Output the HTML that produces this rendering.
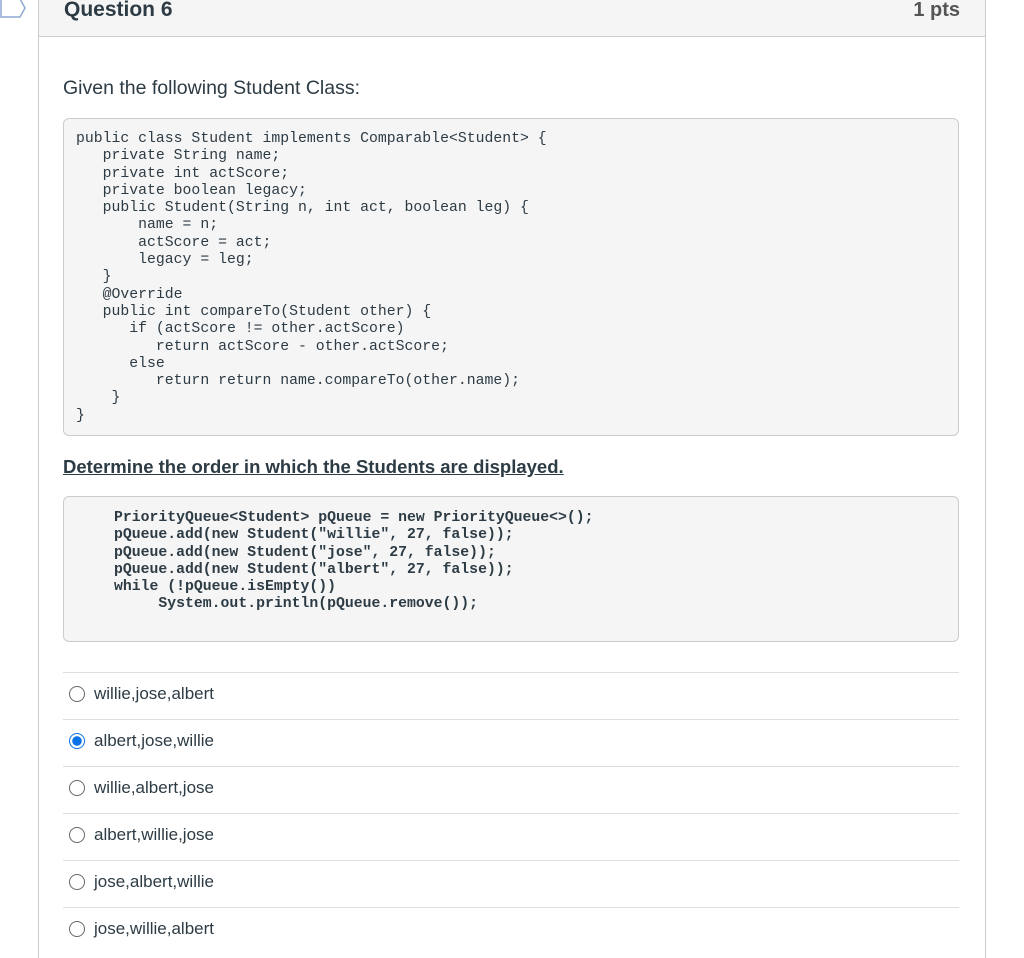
<!DOCTYPE html>
<html><head><style>
body{margin:0;background:#fff;font-family:"Liberation Sans",sans-serif;color:#2d3b45;width:1024px;height:953px;overflow:hidden;position:relative}
.q{position:absolute;left:38px;top:-2px;width:946px;height:960px;border-left:1px solid #c7cdd1;border-right:1px solid #c7cdd1}
.hd{position:absolute;left:0;top:0;width:946px;height:38px;background:#f5f5f5;border-bottom:1px solid #c7cdd1}
.t{position:absolute;left:25px;top:0;font-size:21px;font-weight:bold;color:#2d3b45}
.p{position:absolute;right:25px;top:1px;font-size:20px;font-weight:bold;color:#555}
.abs{position:absolute}
pre{margin:0;font-family:"Liberation Mono",monospace;font-size:14.8px;line-height:17.3px;color:#2d3b45}
.box{position:absolute;left:63px;width:894px;background:#f5f5f5;border:1px solid #c7cdd1;border-radius:6px}
.sep{position:absolute;left:63px;width:896px;height:1px;background:#dcdfe2}
.opt{position:absolute;left:94px;font-size:17px;color:#2d3b45}
.r{position:absolute;left:69px;border:1.5px solid #666;border-radius:50%;box-sizing:border-box;width:16px;height:16px}
</style></head><body>
<svg class="abs" style="left:0;top:-2px" width="28" height="22"><path d="M1 1 V19 H20 L25 10 L20 1" fill="none" stroke="#8fa9d0" stroke-width="1.5"/></svg>
<div class="q"><div class="hd"><div class="t">Question 6</div><div class="p">1 pts</div></div></div>
<div class="abs" style="left:63px;top:77px;font-size:19.5px">Given the following Student Class:</div>
<div class="box" style="top:118px;height:316px"></div>
<pre class="abs" style="left:76px;top:131px">public class Student implements Comparable&lt;Student&gt; {
   private String name;
   private int actScore;
   private boolean legacy;
   public Student(String n, int act, boolean leg) {
       name = n;
       actScore = act;
       legacy = leg;
   }
   @Override
   public int compareTo(Student other) {
      if (actScore != other.actScore)
         return actScore - other.actScore;
      else
         return return name.compareTo(other.name);
    }
}</pre>
<div class="abs" style="left:63px;top:456px;font-size:18.5px;font-weight:bold;text-decoration:underline">Determine the order in which the Students are displayed.</div>
<div class="box" style="top:496px;height:144px"></div>
<pre class="abs" style="left:114px;top:510px;font-weight:bold">PriorityQueue&lt;Student&gt; pQueue = new PriorityQueue&lt;&gt;();
pQueue.add(new Student("willie", 27, false));
pQueue.add(new Student("jose", 27, false));
pQueue.add(new Student("albert", 27, false));
while (!pQueue.isEmpty())
     System.out.println(pQueue.remove());</pre>
<div class="sep" style="top:672px"></div>
<div class="sep" style="top:719px"></div>
<div class="sep" style="top:766px"></div>
<div class="sep" style="top:813px"></div>
<div class="sep" style="top:860px"></div>
<div class="sep" style="top:907px"></div>
<div class="r" style="top:686px"></div><div class="opt" style="top:684px">willie,jose,albert</div>
<div class="r" style="top:733px;border-color:#0b73e6;background:radial-gradient(circle,#0b73e6 0 4.5px,#fff 5px)"></div><div class="opt" style="top:731px">albert,jose,willie</div>
<div class="r" style="top:780px"></div><div class="opt" style="top:778px">willie,albert,jose</div>
<div class="r" style="top:827px"></div><div class="opt" style="top:825px">albert,willie,jose</div>
<div class="r" style="top:874px"></div><div class="opt" style="top:872px">jose,albert,willie</div>
<div class="r" style="top:921px"></div><div class="opt" style="top:919px">jose,willie,albert</div>
</body></html>
